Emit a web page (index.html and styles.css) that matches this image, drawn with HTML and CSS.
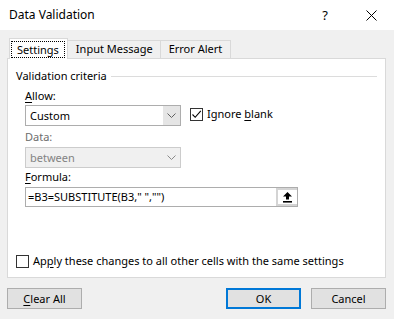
FILE: index.html
```html
<!DOCTYPE html>
<html>
<head>
<meta charset="utf-8">
<link rel="stylesheet" href="styles.css">
</head>
<body>
<div class="titlebar">
  <span class="title">Data Validation</span>
  <span class="cap-btn help">?</span>
  <span class="cap-btn close"><svg width="11" height="11" viewBox="0 0 11 11"><path d="M0.5 0.5 L10.5 10.5 M10.5 0.5 L0.5 10.5" stroke="#000" stroke-width="1" fill="none"/></svg></span>
</div>
<div class="main">
  <div class="tabs">
    <div class="tab active"><span class="focus">Settings</span></div>
    <div class="tab tab-input">Input Message</div>
    <div class="tab">Error Alert</div>
  </div>
  <div class="panel">
    <div class="group-head"><span>Validation criteria</span><span class="rule"></span></div>
    <div class="group-body">
      <div class="label l-allow"><u>A</u>llow:</div>
      <div class="row">
        <div class="combo"><span class="combo-text">Custom</span><span class="combo-btn"><svg width="9" height="5" viewBox="0 0 9 5"><path d="M0.5 0.5 L4.5 4.5 L8.5 0.5" stroke="#606060" fill="none"/></svg></span></div>
        <label class="check ignore"><span class="box"><svg width="11" height="11" viewBox="0 0 11 11"><path d="M1.5 5.5 L4.2 8.3 L9.8 1.8" stroke="#000" stroke-width="1.1" fill="none"/></svg></span><span>Ignore <u>b</u>lank</span></label>
      </div>
      <div class="label disabled l-data">Data:</div>
      <div class="combo disabled"><span class="combo-text">between</span><span class="combo-btn"><svg width="9" height="5" viewBox="0 0 9 5"><path d="M0.5 0.5 L4.5 4.5 L8.5 0.5" stroke="#8a8a8a" fill="none"/></svg></span></div>
      <div class="label l-formula"><u>F</u>ormula:</div>
      <div class="formula">
        <span class="formula-text">=B3=SUBSTITUTE(B3," ","")</span>
        <span class="ref-btn"><svg width="9" height="11" viewBox="0 0 9 11"><path d="M4.5 0 L9 4.5 L6 4.5 L6 7.5 L3 7.5 L3 4.5 L0 4.5 Z" fill="#000"/><rect x="0" y="9" width="9" height="1.6" fill="#000"/></svg></span>
      </div>
    </div>
    <label class="check apply"><span class="box"></span><span>Ap<u>p</u>ly these changes to all other cells with the same settings</span></label>
  </div>
  <div class="buttons">
    <span class="btn"><u>C</u>lear All</span>
    <span class="spacer"></span>
    <span class="btn default">OK</span>
    <span class="btn">Cancel</span>
  </div>
</div>
</body>
</html>
```

FILE: styles.css
```css
* { box-sizing: border-box; }
html, body { margin: 0; padding: 0; }
body {
  width: 394px;
  height: 319px;
  overflow: hidden;
  background: #f0f0f0;
  font-family: "Noto Sans", "Open Sans", sans-serif;
  font-size: 11px;
  line-height: 16px;
  color: #000;
}
u { text-decoration: underline; text-underline-offset: 2px; }

.titlebar {
  height: 30px;
  background: #fff;
  display: flex;
  align-items: center;
  padding-left: 9px;
}
.title { flex: 1; font-size: 12px; }
.cap-btn {
  width: 46px;
  height: 30px;
  display: flex;
  align-items: center;
  justify-content: center;
}
.help { font-size: 13px; }

.main { padding: 8px 8px 0 7px; }

.tabs {
  display: flex;
  align-items: flex-end;
  height: 20px;
  margin-left: 2px;
}
.tab {
  height: 18px;
  border: 1px solid #d9d9d9;
  border-bottom: none;
  background: #f0f0f0;
  padding: 0 8px;
  line-height: 16px;
  margin-left: -1px;
}
.tab.tab-input { padding: 0 7px 0 8px; }
.tab.active {
  position: relative;
  z-index: 1;
  height: 21px;
  margin-bottom: -1px;
  margin-left: 0;
  background: #fff;
  padding: 3px 3px 0 2px;
}
.focus {
  display: block;
  outline: 1px dotted #000;
  padding: 0 5px;
  height: 15px;
  line-height: 15px;
}

.panel {
  height: 220px;
  background: #fff;
  border: 1px solid #d9d9d9;
  padding: 9px 8px 0 8px;
  display: flex;
  flex-direction: column;
}
.group-head { display: flex; align-items: center; height: 16px; }
.rule { flex: 1; height: 1px; background: #dcdcdc; margin-left: 4px; margin-top: 1px; }

.group-body { padding-left: 9px; }
.label { height: 16px; }
.l-allow { margin-top: 4px; }
.l-data { margin-top: 3px; }
.l-formula { margin-top: 1px; }
.label.disabled { color: #6d6d6d; }

.row { display: flex; align-items: flex-start; margin-top: 1px; }

.combo {
  width: 156px;
  height: 21px;
  border: 1px solid #adadad;
  display: flex;
  background: #fff;
}
.combo.disabled { border-color: #cccccc; background: #f0f0f0; color: #838383; margin-top: 2px; }
.combo-text { flex: 1; padding-left: 4px; line-height: 19px; }
.combo-btn {
  width: 17px;
  background: #e5e5e5;
  display: flex;
  align-items: center;
  justify-content: center;
}
.combo.disabled .combo-btn { background: #f0f0f0; }

.check { display: flex; align-items: center; }
.box {
  width: 13px;
  height: 13px;
  border: 1px solid #333;
  background: #fff;
  margin-right: 4px;
  display: flex;
  align-items: center;
  justify-content: center;
}
.ignore { margin-left: 9px; margin-top: 1px; }

.formula {
  margin-top: 2px;
  width: 273px;
  height: 20px;
  border: 1px solid #adadad;
  display: flex;
}
.formula-text { flex: 1; padding-left: 2px; line-height: 18px; }
.ref-btn {
  width: 21px;
  border: 2px solid #d4d4d4;
  border-right: none;
  background: #fff;
  display: flex;
  align-items: center;
  justify-content: center;
}

.apply { margin-top: auto; margin-bottom: 8px; }

.buttons {
  display: flex;
  margin-top: 10px;
  gap: 10px;
}
.spacer { flex: 1; }
.btn {
  width: 75px;
  height: 21px;
  border: 1px solid #adadad;
  background: #e1e1e1;
  display: flex;
  align-items: center;
  justify-content: center;
}
.btn.default { border: 2px solid #0078d7; }
```
